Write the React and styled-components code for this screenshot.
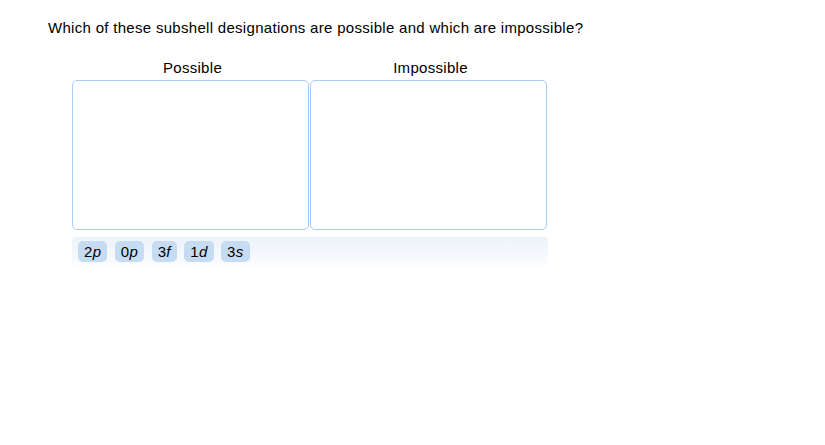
import styled, { createGlobalStyle } from "styled-components"

const GlobalStyle = createGlobalStyle`
  body {
    margin: 0;
    background: #ffffff;
    font-family: "Liberation Sans", Arial, sans-serif;
    color: #000000;
  }
`

const chips = [
  { num: "2", letter: "p" },
  { num: "0", letter: "p" },
  { num: "3", letter: "f" },
  { num: "1", letter: "d" },
  { num: "3", letter: "s" },
]

export default function App() {
  return (
    <>
      <GlobalStyle />
      <Page>
        <Question>Which of these subshell designations are possible and which are impossible?</Question>
        <Bins>
          <Bin>
            <BinLabel>Possible</BinLabel>
            <DropZone />
          </Bin>
          <Bin>
            <BinLabel>Impossible</BinLabel>
            <DropZone />
          </Bin>
        </Bins>
        <Tray>
          {chips.map((c, i) => (
            <Chip key={i}>
              {c.num}
              <i>{c.letter}</i>
            </Chip>
          ))}
        </Tray>
      </Page>
    </>
  )
}

const Page = styled.div`
  padding: 19px 0 0 48px;
`

const Question = styled.div`
  font-size: 15px;
  line-height: 17px;
  letter-spacing: 0.3px;
`

const Bins = styled.div`
  display: flex;
  gap: 1px;
  margin: 23px 0 0 24px;
`

const Bin = styled.div`
  display: flex;
  flex-direction: column;
  align-items: center;
`

const BinLabel = styled.div`
  font-size: 15px;
  line-height: 17px;
  letter-spacing: 0.3px;
  margin-bottom: 4px;
  padding-left: 4px;
`

const DropZone = styled.div`
  width: 235px;
  height: 148px;
  border: 1px solid #a9cdf2;
  border-radius: 5px;
  background: #ffffff;
`

const Tray = styled.div`
  display: flex;
  gap: 7.5px;
  width: 464px;
  margin: 7px 0 0 24px;
  padding: 4px 6px 8px;
  border-radius: 4px;
  background: linear-gradient(to bottom, #edf3fb 0%, #f6f9fd 60%, #ffffff 100%);
`

const Chip = styled.div`
  display: flex;
  align-items: center;
  height: 21px;
  padding: 0 6px;
  border-radius: 5px;
  background: #c6dcf3;
  font-size: 15px;
  letter-spacing: 0.3px;

  > i {
    font-style: italic;
  }
`
